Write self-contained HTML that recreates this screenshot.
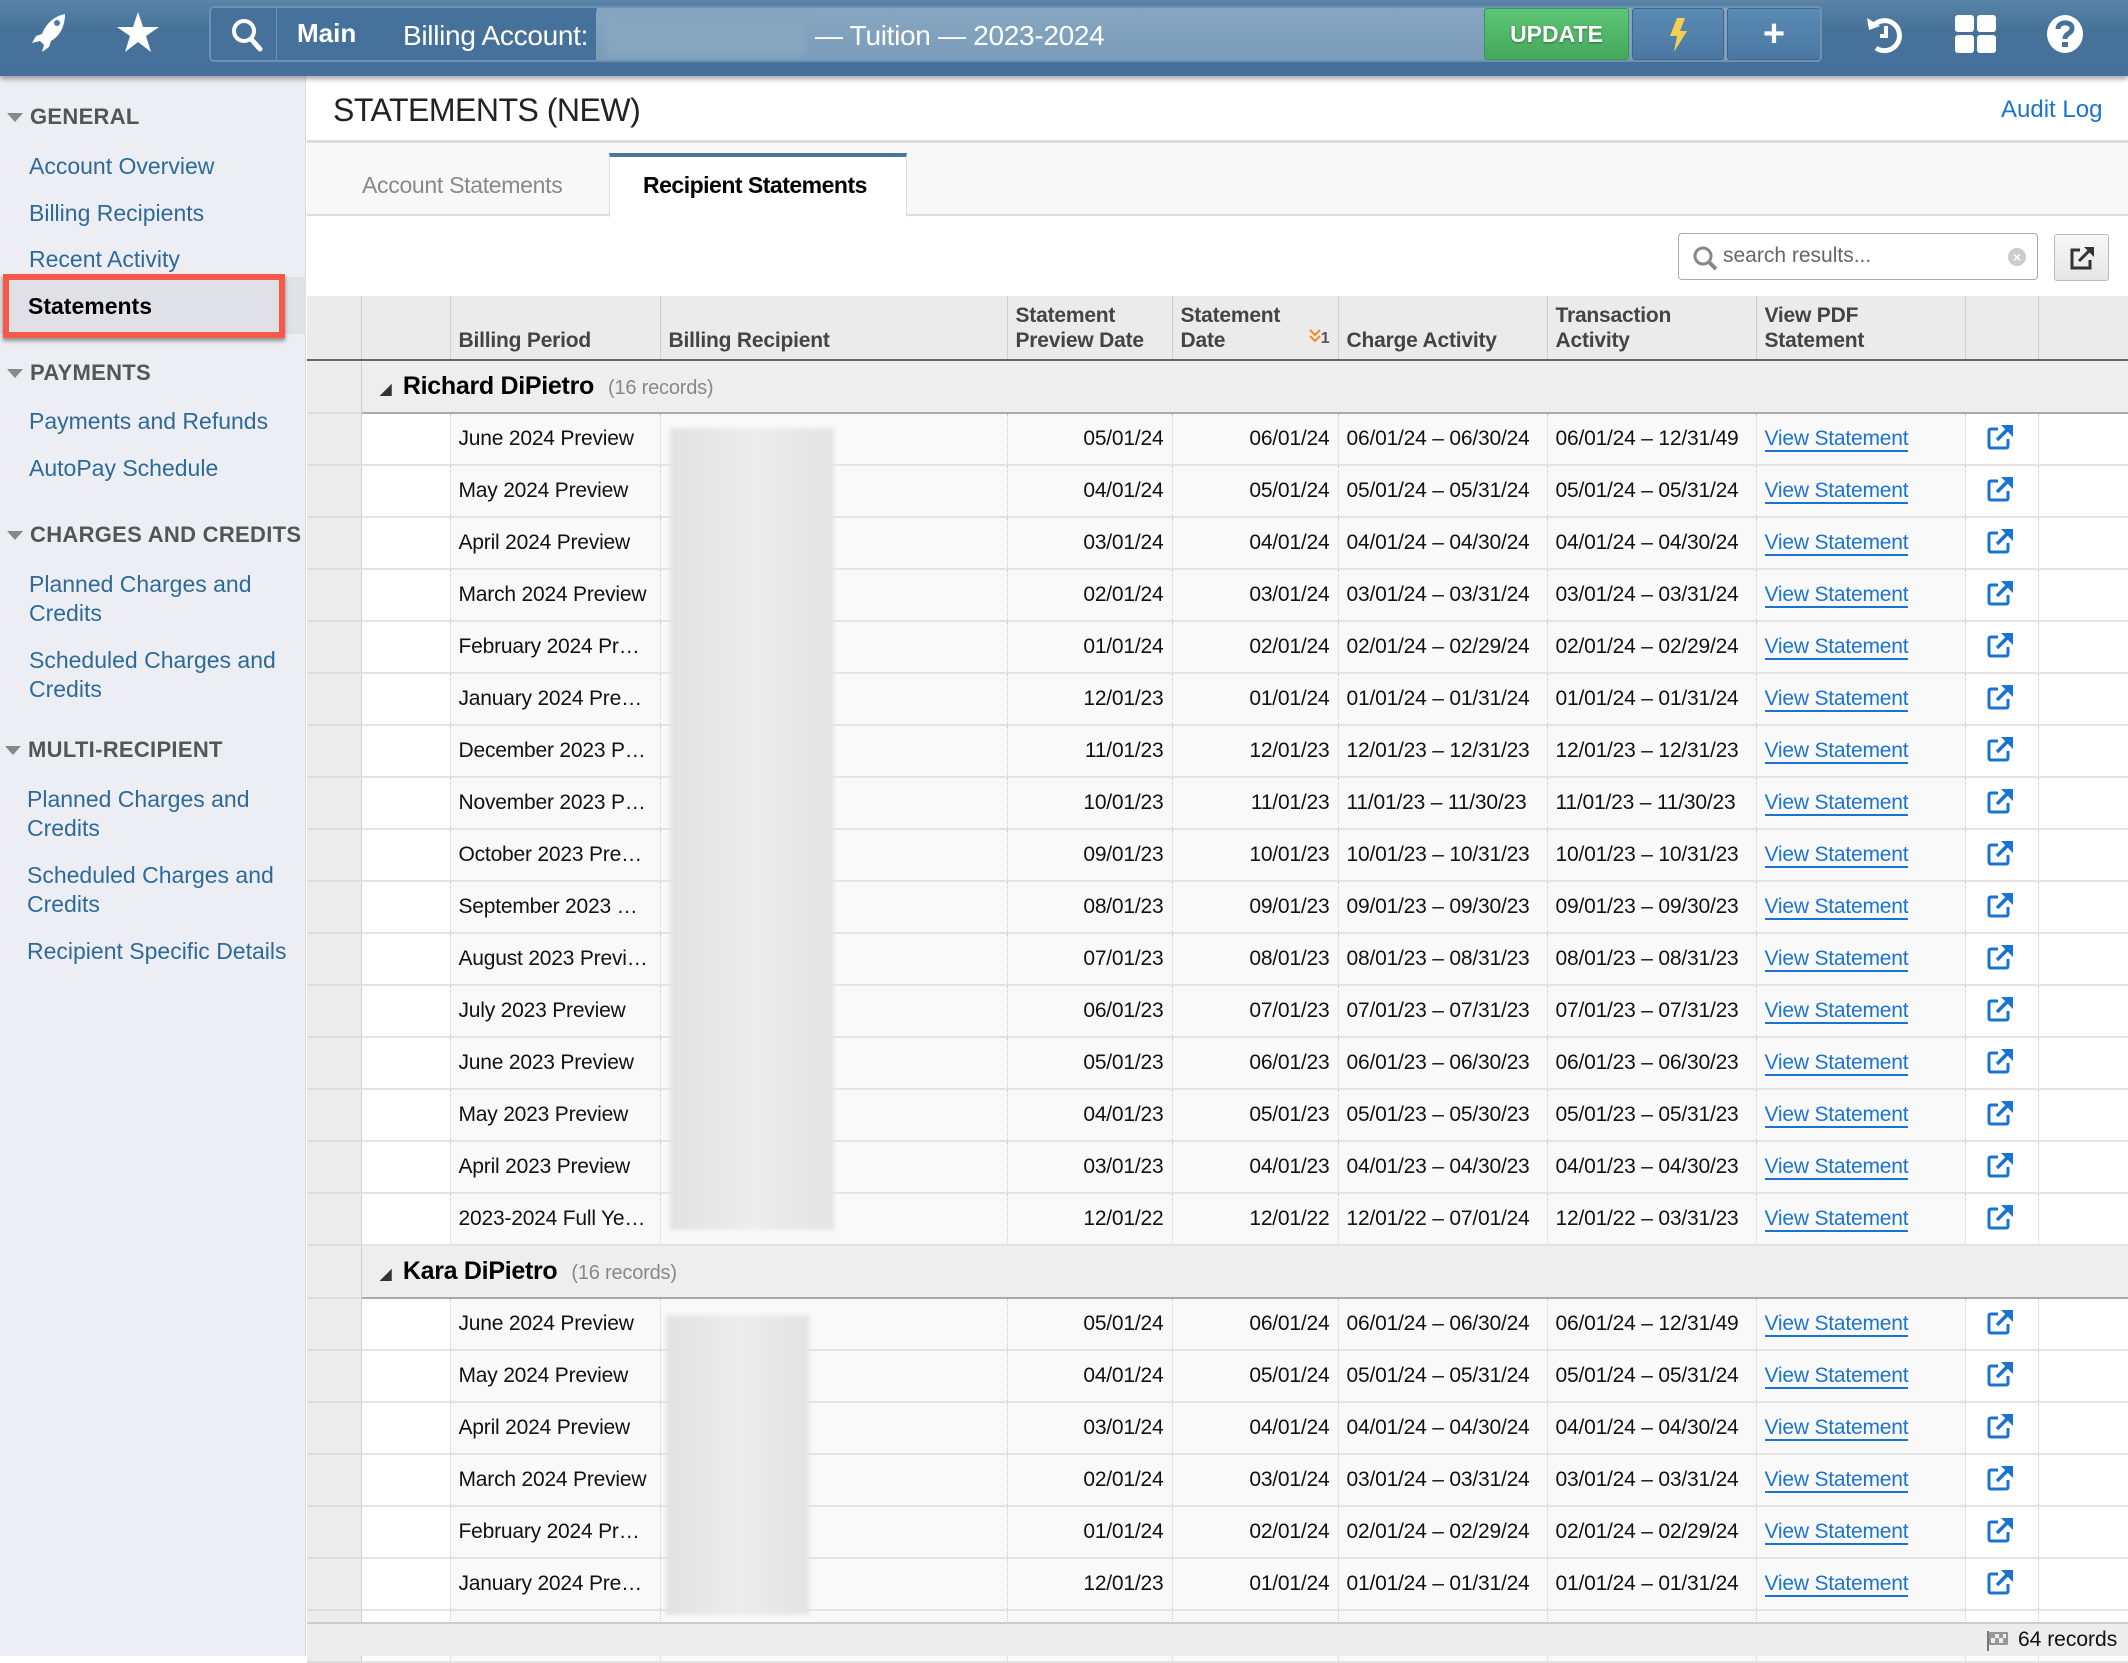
<!DOCTYPE html>
<html><head><meta charset="utf-8">
<style>
*{box-sizing:border-box;margin:0;padding:0}
body{width:2128px;height:1656px;overflow:hidden;background:#fff;font-family:"Liberation Sans",sans-serif;position:relative}
.abs{position:absolute}
#bar{left:0;top:0;width:2128px;height:76px;background:linear-gradient(#5a84a8,#46729a 40%,#45709a);box-shadow:0 3px 5px rgba(0,0,0,.35);z-index:5}
#crumb{left:209px;top:6px;width:1613px;height:56px;border:2px solid #6d91b2;border-radius:5px;background:#45719a;overflow:hidden}
#crumbl{left:385px;top:0;right:0;height:56px;background:linear-gradient(#86a6c1,#7b9cb9)}
#side{left:0;top:76px;width:306px;height:1580px;background:#eceef3;border-right:1px solid #d8dae0}
.sh{position:absolute;left:30px;font-size:22px;font-weight:bold;color:#555;letter-spacing:.3px}
.sh:before{content:"";position:absolute;left:-23px;top:9px;border-left:8px solid transparent;border-right:8px solid transparent;border-top:9px solid #888}
.sl{position:absolute;left:29px;font-size:23px;color:#2d6a9a;line-height:29px}
td,th{font-size:21px;letter-spacing:-.2px}
table{border-collapse:collapse;table-layout:fixed}
th{background:#ebebeb;color:#444;font-weight:bold;text-align:left;vertical-align:bottom;padding:0 8px 6px;border-right:1px solid #d0d0d0;height:64px;line-height:25px;border-bottom:2px solid #666}
td{height:52px;border-bottom:2px solid #e4e4e4;border-right:1px dotted #ccc;padding:0 8px;white-space:nowrap;overflow:hidden;color:#111;background:#f9f9f9}
td.g{background:#ececec;border-right:1px solid #d0d0d0;border-bottom:2px solid #ddd}
td.w{background:#fff}
td.r{text-align:right}
td.l a{color:#1a73d0;text-decoration:none;border-bottom:2px solid #1a73d0}
tr.grp td{background:#eeeeee;height:53px;border-bottom:2px solid #aaa}
tr.grp td.g{background:#ececec;border-bottom:2px solid #ddd}
.gn{font-weight:bold;font-size:25px;color:#000;letter-spacing:-.3px}
.gc{color:#888;font-size:20px;margin-left:14px}
.blur{position:absolute;background:linear-gradient(90deg,#e2e2e2,#ececec 50%,#e4e4e4);filter:blur(2px)}
</style></head><body>
<div id="bar" class="abs">
 <svg class="abs" style="left:32px;top:12px" width="36" height="40" viewBox="0 0 36 40"><path d="M33 2C22 4 14 12 10 22L4 24 0 31 8 29 12 33 10 40 17 35 19 29C28 24 33 14 33 2Z" fill="#fff"/><circle cx="25" cy="11" r="3" fill="#4d7aa0"/></svg>
 <svg class="abs" style="left:117px;top:12px" width="42" height="40" viewBox="0 0 42 40"><path d="M21 0L26 15 42 15 29 24 34 40 21 30 8 40 13 24 0 15 16 15Z" fill="#fff"/></svg>
 <div id="crumb" class="abs">
  <div id="crumbl" class="abs"></div>
  <div class="abs" style="left:65px;top:0;width:1px;height:56px;background:#6d91b2"></div>
  <svg class="abs" style="left:20px;top:10px" width="32" height="34" viewBox="0 0 32 34"><circle cx="13" cy="13" r="10" fill="none" stroke="#fff" stroke-width="4"/><path d="M20 21L29 31" stroke="#fff" stroke-width="5" stroke-linecap="round"/></svg>
  <svg class="abs" style="left:360px;top:0" width="30" height="56"><path d="M0 0L26 0 14 56 0 56Z" fill="#45719a"/></svg>
  <div class="abs" style="left:86px;top:10px;font-size:26px;font-weight:bold;color:#fff">Main</div>
  <div class="abs" style="left:192px;top:12px;font-size:28px;color:#fff;letter-spacing:-.3px">Billing Account:</div>
  <div class="abs" style="left:395px;top:8px;width:200px;height:40px;background:#86a5bf;filter:blur(3px)"></div>
  <div class="abs" style="left:604px;top:12px;font-size:28px;color:#fff;letter-spacing:-.3px">— Tuition — 2023-2024</div>
  <div class="abs" style="left:1273px;top:0;width:145px;height:52px;background:linear-gradient(#5dc676,#45a85a);border:1px solid #3a9a4e;border-radius:3px;color:#fff;font-weight:bold;font-size:23px;text-align:center;line-height:50px;text-shadow:0 1px 2px rgba(0,0,0,.4)">UPDATE</div>
  <div class="abs" style="left:1421px;top:0;width:92px;height:52px;background:linear-gradient(#5a8bb5,#4a78a2);border:1px solid #3d6689;border-radius:3px"></div>
  <svg class="abs" style="left:1457px;top:10px" width="20" height="34" viewBox="0 0 20 34"><path d="M9 0L17 0 12 13 19 13 6 34 9 18 2 18Z" fill="#f5cf52"/></svg>
  <div class="abs" style="left:1516px;top:0;width:94px;height:52px;background:linear-gradient(#5a8bb5,#4a78a2);border:1px solid #3d6689;border-radius:3px;color:#fff;font-weight:bold;font-size:38px;text-align:center;line-height:50px">+</div>
 </div>
 <svg class="abs" style="left:1866px;top:14px" width="40" height="42" viewBox="0 0 40 42"><path d="M7 12A15 15 0 1 1 10 34" fill="none" stroke="#fff" stroke-width="5"/><path d="M1 4L3 16 14 12Z" fill="#fff"/><path d="M20 12V22H14" fill="none" stroke="#fff" stroke-width="4"/></svg>
 <svg class="abs" style="left:1955px;top:15px" width="41" height="38"><rect x="0" y="0" width="19" height="17" rx="3" fill="#fff"/><rect x="22" y="0" width="19" height="17" rx="3" fill="#fff"/><rect x="0" y="20" width="19" height="18" rx="3" fill="#fff"/><rect x="22" y="20" width="19" height="18" rx="3" fill="#fff"/></svg>
 <svg class="abs" style="left:2046px;top:14px" width="38" height="40" viewBox="0 0 38 40"><ellipse cx="19" cy="20" rx="18" ry="19" fill="#fff"/><path d="M12 15C12 7 26 7 26 14 26 20 19 19 19 25" fill="none" stroke="#46729a" stroke-width="5"/><rect x="16" y="28" width="6" height="5" fill="#46729a"/></svg>
</div>

<div id="side" class="abs">
 <div class="sh" style="top:28px">GENERAL</div>
 <div class="sl" style="top:76px">Account Overview</div>
 <div class="sl" style="top:123px">Billing Recipients</div>
 <div class="sl" style="top:169px">Recent Activity</div>
 <div class="abs" style="left:0;top:201px;width:306px;height:57px;background:#dfe1e7"></div>
 <div class="abs" style="left:3px;top:198px;width:282px;height:64px;border:6px solid #f4594a;box-shadow:0 3px 4px rgba(0,0,0,.4)"></div>
 <div class="sl" style="top:216px;color:#000;font-weight:bold;left:28px">Statements</div>
 <div class="sh" style="top:284px">PAYMENTS</div>
 <div class="sl" style="top:331px">Payments and Refunds</div>
 <div class="sl" style="top:378px">AutoPay Schedule</div>
 <div class="sh" style="top:446px">CHARGES AND CREDITS</div>
 <div class="sl" style="top:494px">Planned Charges and<br>Credits</div>
 <div class="sl" style="top:570px">Scheduled Charges and<br>Credits</div>
 <div class="sh" style="top:661px;left:28px">MULTI-RECIPIENT</div>
 <div class="sl" style="top:709px;left:27px">Planned Charges and<br>Credits</div>
 <div class="sl" style="top:785px;left:27px">Scheduled Charges and<br>Credits</div>
 <div class="sl" style="top:861px;left:27px">Recipient Specific Details</div>
</div>

<div class="abs" style="left:333px;top:92px;font-size:32px;color:#222;letter-spacing:-.5px">STATEMENTS (NEW)</div>
<div class="abs" style="left:2001px;top:96px;font-size:24px;color:#1a73d0">Audit Log</div>
<div class="abs" style="left:307px;top:140px;width:1821px;height:76px;background:#f8f8f8;border-top:3px solid #dcdcdc;border-bottom:2px solid #ddd"></div>
<div class="abs" style="left:362px;top:172px;font-size:23px;color:#888;letter-spacing:-.3px">Account Statements</div>
<div class="abs" style="left:609px;top:153px;width:298px;height:64px;background:#fff;border-top:4px solid #4a769c;border-left:1px solid #ddd;border-right:1px solid #ddd"></div>
<div class="abs" style="left:643px;top:172px;font-size:23px;color:#000;font-weight:bold;letter-spacing:-.5px">Recipient Statements</div>

<div class="abs" style="left:1678px;top:233px;width:360px;height:47px;border:1px solid #aaa;border-radius:4px;background:#fff"></div>
<svg class="abs" style="left:1692px;top:245px" width="26" height="26"><circle cx="11" cy="11" r="8" fill="none" stroke="#888" stroke-width="3"/><path d="M17 17L24 24" stroke="#888" stroke-width="4"/></svg>
<div class="abs" style="left:1723px;top:244px;font-size:21px;color:#666">search results...</div>
<div class="abs" style="left:2008px;top:248px;width:18px;height:18px;border-radius:50%;background:#ccc;color:#fff;font-size:14px;font-weight:bold;text-align:center;line-height:18px">×</div>
<div class="abs" style="left:2054px;top:234px;width:55px;height:47px;border:1px solid #bbb;border-radius:3px;background:linear-gradient(#f8f8f8,#e6e6e6)"></div>
<svg class="abs" style="left:2068px;top:245px" width="28" height="26" viewBox="0 0 28 26"><path d="M12 5H4V23H22V15" fill="none" stroke="#333" stroke-width="3"/><path d="M11 16L23 4" stroke="#333" stroke-width="3"/><path d="M16 2H26V12Z" fill="#333"/></svg>

<table class="abs" style="left:307px;top:296px;width:1821px">
<colgroup><col style="width:54px"><col style="width:89px"><col style="width:210px"><col style="width:347px"><col style="width:165px"><col style="width:166px"><col style="width:209px"><col style="width:209px"><col style="width:209px"><col style="width:73px"><col style="width:90px"></colgroup>
<tr><th></th><th></th><th>Billing Period</th><th>Billing Recipient</th><th>Statement<br>Preview Date</th><th style="position:relative">Statement<br>Date<span style="position:absolute;right:8px;bottom:8px;font-size:16px"><svg width="12" height="14" viewBox="0 0 12 14"><path d="M1 1L6 6 11 1M1 7L6 12 11 7" fill="none" stroke="#f08a24" stroke-width="2"/></svg><span style="color:#555">1</span></span></th><th>Charge Activity</th><th>Transaction<br>Activity</th><th>View PDF<br>Statement</th><th></th><th style="border-right:none"></th></tr>
<tr class="grp"><td class="g"></td><td colspan="10" style="padding-left:18px;border-right:none"><span style="font-size:16px;color:#333">◢</span>&nbsp;&nbsp;<span class="gn">Richard DiPietro</span><span class="gc">(16 records)</span></td></tr>
<tr><td class="g"></td><td class="w"></td><td>June 2024 Preview</td><td></td><td class="r">05/01/24</td><td class="r">06/01/24</td><td>06/01/24 – 06/30/24</td><td>06/01/24 – 12/31/49</td><td class="l"><a>View Statement</a></td><td class="w i"></td><td class="w"></td></tr>
<tr><td class="g"></td><td class="w"></td><td>May 2024 Preview</td><td></td><td class="r">04/01/24</td><td class="r">05/01/24</td><td>05/01/24 – 05/31/24</td><td>05/01/24 – 05/31/24</td><td class="l"><a>View Statement</a></td><td class="w i"></td><td class="w"></td></tr>
<tr><td class="g"></td><td class="w"></td><td>April 2024 Preview</td><td></td><td class="r">03/01/24</td><td class="r">04/01/24</td><td>04/01/24 – 04/30/24</td><td>04/01/24 – 04/30/24</td><td class="l"><a>View Statement</a></td><td class="w i"></td><td class="w"></td></tr>
<tr><td class="g"></td><td class="w"></td><td>March 2024 Preview</td><td></td><td class="r">02/01/24</td><td class="r">03/01/24</td><td>03/01/24 – 03/31/24</td><td>03/01/24 – 03/31/24</td><td class="l"><a>View Statement</a></td><td class="w i"></td><td class="w"></td></tr>
<tr><td class="g"></td><td class="w"></td><td>February 2024 Pr…</td><td></td><td class="r">01/01/24</td><td class="r">02/01/24</td><td>02/01/24 – 02/29/24</td><td>02/01/24 – 02/29/24</td><td class="l"><a>View Statement</a></td><td class="w i"></td><td class="w"></td></tr>
<tr><td class="g"></td><td class="w"></td><td>January 2024 Pre…</td><td></td><td class="r">12/01/23</td><td class="r">01/01/24</td><td>01/01/24 – 01/31/24</td><td>01/01/24 – 01/31/24</td><td class="l"><a>View Statement</a></td><td class="w i"></td><td class="w"></td></tr>
<tr><td class="g"></td><td class="w"></td><td>December 2023 P…</td><td></td><td class="r">11/01/23</td><td class="r">12/01/23</td><td>12/01/23 – 12/31/23</td><td>12/01/23 – 12/31/23</td><td class="l"><a>View Statement</a></td><td class="w i"></td><td class="w"></td></tr>
<tr><td class="g"></td><td class="w"></td><td>November 2023 P…</td><td></td><td class="r">10/01/23</td><td class="r">11/01/23</td><td>11/01/23 – 11/30/23</td><td>11/01/23 – 11/30/23</td><td class="l"><a>View Statement</a></td><td class="w i"></td><td class="w"></td></tr>
<tr><td class="g"></td><td class="w"></td><td>October 2023 Pre…</td><td></td><td class="r">09/01/23</td><td class="r">10/01/23</td><td>10/01/23 – 10/31/23</td><td>10/01/23 – 10/31/23</td><td class="l"><a>View Statement</a></td><td class="w i"></td><td class="w"></td></tr>
<tr><td class="g"></td><td class="w"></td><td>September 2023 …</td><td></td><td class="r">08/01/23</td><td class="r">09/01/23</td><td>09/01/23 – 09/30/23</td><td>09/01/23 – 09/30/23</td><td class="l"><a>View Statement</a></td><td class="w i"></td><td class="w"></td></tr>
<tr><td class="g"></td><td class="w"></td><td>August 2023 Previ…</td><td></td><td class="r">07/01/23</td><td class="r">08/01/23</td><td>08/01/23 – 08/31/23</td><td>08/01/23 – 08/31/23</td><td class="l"><a>View Statement</a></td><td class="w i"></td><td class="w"></td></tr>
<tr><td class="g"></td><td class="w"></td><td>July 2023 Preview</td><td></td><td class="r">06/01/23</td><td class="r">07/01/23</td><td>07/01/23 – 07/31/23</td><td>07/01/23 – 07/31/23</td><td class="l"><a>View Statement</a></td><td class="w i"></td><td class="w"></td></tr>
<tr><td class="g"></td><td class="w"></td><td>June 2023 Preview</td><td></td><td class="r">05/01/23</td><td class="r">06/01/23</td><td>06/01/23 – 06/30/23</td><td>06/01/23 – 06/30/23</td><td class="l"><a>View Statement</a></td><td class="w i"></td><td class="w"></td></tr>
<tr><td class="g"></td><td class="w"></td><td>May 2023 Preview</td><td></td><td class="r">04/01/23</td><td class="r">05/01/23</td><td>05/01/23 – 05/30/23</td><td>05/01/23 – 05/31/23</td><td class="l"><a>View Statement</a></td><td class="w i"></td><td class="w"></td></tr>
<tr><td class="g"></td><td class="w"></td><td>April 2023 Preview</td><td></td><td class="r">03/01/23</td><td class="r">04/01/23</td><td>04/01/23 – 04/30/23</td><td>04/01/23 – 04/30/23</td><td class="l"><a>View Statement</a></td><td class="w i"></td><td class="w"></td></tr>
<tr><td class="g"></td><td class="w"></td><td>2023-2024 Full Ye…</td><td></td><td class="r">12/01/22</td><td class="r">12/01/22</td><td>12/01/22 – 07/01/24</td><td>12/01/22 – 03/31/23</td><td class="l"><a>View Statement</a></td><td class="w i"></td><td class="w"></td></tr>
<tr class="grp"><td class="g"></td><td colspan="10" style="padding-left:18px;border-right:none"><span style="font-size:16px;color:#333">◢</span>&nbsp;&nbsp;<span class="gn">Kara DiPietro</span><span class="gc">(16 records)</span></td></tr>
<tr><td class="g"></td><td class="w"></td><td>June 2024 Preview</td><td></td><td class="r">05/01/24</td><td class="r">06/01/24</td><td>06/01/24 – 06/30/24</td><td>06/01/24 – 12/31/49</td><td class="l"><a>View Statement</a></td><td class="w i"></td><td class="w"></td></tr>
<tr><td class="g"></td><td class="w"></td><td>May 2024 Preview</td><td></td><td class="r">04/01/24</td><td class="r">05/01/24</td><td>05/01/24 – 05/31/24</td><td>05/01/24 – 05/31/24</td><td class="l"><a>View Statement</a></td><td class="w i"></td><td class="w"></td></tr>
<tr><td class="g"></td><td class="w"></td><td>April 2024 Preview</td><td></td><td class="r">03/01/24</td><td class="r">04/01/24</td><td>04/01/24 – 04/30/24</td><td>04/01/24 – 04/30/24</td><td class="l"><a>View Statement</a></td><td class="w i"></td><td class="w"></td></tr>
<tr><td class="g"></td><td class="w"></td><td>March 2024 Preview</td><td></td><td class="r">02/01/24</td><td class="r">03/01/24</td><td>03/01/24 – 03/31/24</td><td>03/01/24 – 03/31/24</td><td class="l"><a>View Statement</a></td><td class="w i"></td><td class="w"></td></tr>
<tr><td class="g"></td><td class="w"></td><td>February 2024 Pr…</td><td></td><td class="r">01/01/24</td><td class="r">02/01/24</td><td>02/01/24 – 02/29/24</td><td>02/01/24 – 02/29/24</td><td class="l"><a>View Statement</a></td><td class="w i"></td><td class="w"></td></tr>
<tr><td class="g"></td><td class="w"></td><td>January 2024 Pre…</td><td></td><td class="r">12/01/23</td><td class="r">01/01/24</td><td>01/01/24 – 01/31/24</td><td>01/01/24 – 01/31/24</td><td class="l"><a>View Statement</a></td><td class="w i"></td><td class="w"></td></tr>
<tr><td class="g"></td><td class="w"></td><td></td><td></td><td></td><td></td><td></td><td></td><td></td><td class="w"></td><td class="w"></td></tr>
</table>

<div class="blur" style="left:670px;top:428px;width:164px;height:802px"></div>
<div class="blur" style="left:666px;top:1315px;width:143px;height:300px"></div>

<svg width="0" height="0" style="position:absolute"><defs><g id="ext"><path d="M12 5H5Q3 5 3 7V22Q3 24 5 24H20Q22 24 22 22V15" fill="none" stroke="#1a73d0" stroke-width="3"/><path d="M11 16L22 5" stroke="#1a73d0" stroke-width="3.5"/><path d="M15 1H27V13Z" fill="#1a73d0"/></g></defs></svg>
<svg class="abs" style="left:1986px;top:424px" width="28" height="1190">
<use href="#ext" y="0"/><use href="#ext" y="52"/><use href="#ext" y="104"/><use href="#ext" y="156"/><use href="#ext" y="208"/><use href="#ext" y="260"/><use href="#ext" y="312"/><use href="#ext" y="364"/><use href="#ext" y="416"/><use href="#ext" y="468"/><use href="#ext" y="520"/><use href="#ext" y="572"/><use href="#ext" y="624"/><use href="#ext" y="676"/><use href="#ext" y="728"/><use href="#ext" y="780"/>
<use href="#ext" y="885"/><use href="#ext" y="937"/><use href="#ext" y="989"/><use href="#ext" y="1041"/><use href="#ext" y="1093"/><use href="#ext" y="1145"/>
</svg>

<div class="abs" style="left:307px;top:1622px;width:1821px;height:34px;background:#ededed;border-top:2px solid #ccc"></div>
<svg class="abs" style="left:1986px;top:1630px" width="24" height="22"><path d="M2 1V21" stroke="#777" stroke-width="2"/><path d="M4 3H21V14H4Z" fill="none" stroke="#777" stroke-width="1.5"/><path d="M4 3H9V8H4ZM13 3H17V8H13ZM9 8H13V14H9ZM17 8H21V14H17Z" fill="#999"/></svg>
<div class="abs" style="left:2018px;top:1628px;font-size:21px;color:#111">64 records</div>
</body></html>
